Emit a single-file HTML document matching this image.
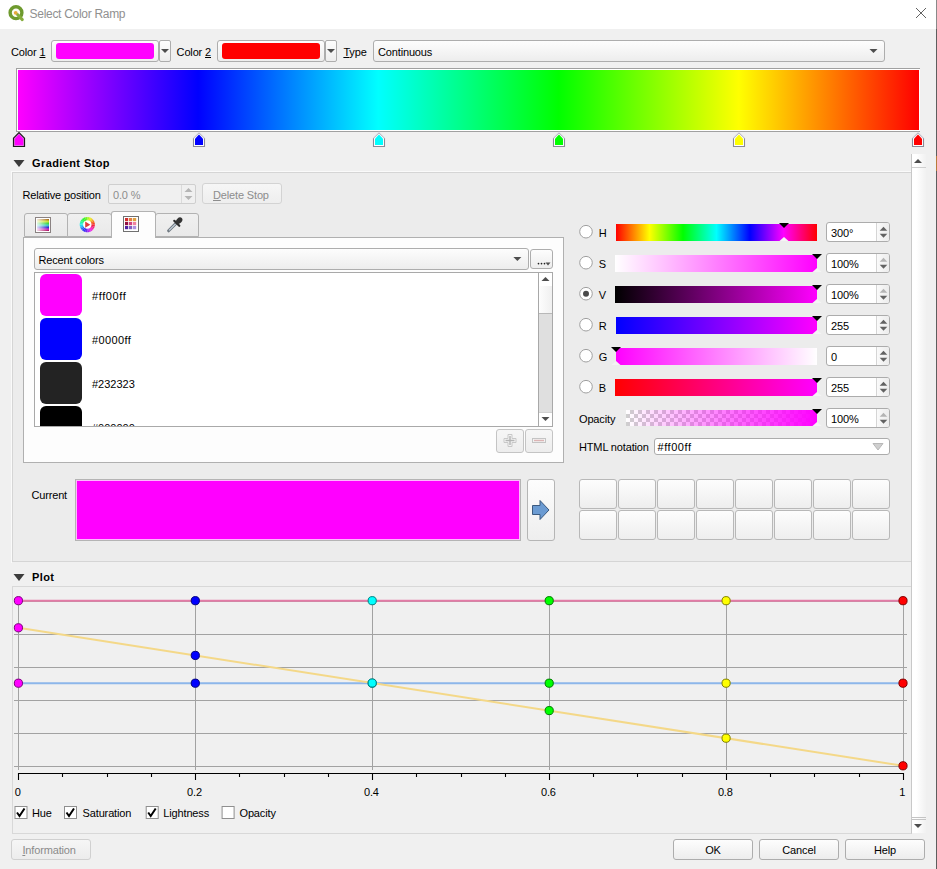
<!DOCTYPE html><html><head><meta charset="utf-8"><style>
html,body{margin:0;padding:0;}
body{width:937px;height:869px;overflow:hidden;position:relative;background:#f0f0f0;font-family:"Liberation Sans", sans-serif;}
.t{position:absolute;white-space:nowrap;letter-spacing:-0.15px;}
.b{position:absolute;box-sizing:border-box;}
svg{position:absolute;left:0;top:0;}
u{text-decoration:underline;text-underline-offset:1px;}
</style></head><body>

<div class="b" style="left:0px;top:0px;width:937px;height:29px;background:#fff"></div>
<svg width="40" height="29" style="left:0;top:0">
<circle cx="16" cy="12.7" r="5.9" fill="#fbfbf3" stroke="#6e9a2e" stroke-width="3.4"/>
<line x1="17.5" y1="14.5" x2="22.3" y2="19.6" stroke="#86ad3c" stroke-width="3" stroke-linecap="round"/>
<circle cx="15.7" cy="12.8" r="1.9" fill="#e6a83a"/>
</svg>
<div class="t" style="left:29.6px;top:7.34px;font-size:12px;line-height:15px;color:#909090;font-weight:normal;letter-spacing:-0.3px;">Select Color Ramp</div>
<svg width="937" height="29" style="left:0;top:0"><path d="M916 8 L926 18 M926 8 L916 18" stroke="#505050" stroke-width="0.9"/></svg>
<div class="b" style="left:936px;top:0px;width:1px;height:29px;background:#8a8a8a"></div>
<div class="b" style="left:936px;top:29px;width:1px;height:840px;background:#5e5e5e"></div>
<div class="b" style="left:936px;top:156px;width:1px;height:15px;background:#b87a3a"></div>
<div class="t" style="left:11px;top:45.19px;font-size:11px;line-height:14px;color:#000;font-weight:normal;">Color <u>1</u></div>
<div class="b" style="left:51px;top:40px;width:108px;height:22px;border:1px solid #adadad;border-radius:3px;background:linear-gradient(#fdfdfd,#ededed)"></div>
<div class="b" style="left:56px;top:43px;width:98px;height:16px;background:#ff00ff;border-radius:3px"></div>
<div class="b" style="left:159px;top:40px;width:12px;height:22px;border:1px solid #adadad;border-radius:2px;background:linear-gradient(#fdfdfd,#ededed)"></div>
<svg width="937" height="869" style="pointer-events:none"><path d="M161.0 49.0 L169.0 49.0 L165 53.0 Z" fill="#4d4d4d"/></svg>
<div class="t" style="left:176.6px;top:45.19px;font-size:11px;line-height:14px;color:#000;font-weight:normal;">Color <u>2</u></div>
<div class="b" style="left:217px;top:40px;width:108px;height:22px;border:1px solid #adadad;border-radius:3px;background:linear-gradient(#fdfdfd,#ededed)"></div>
<div class="b" style="left:222px;top:43px;width:98px;height:16px;background:#ff0000;border-radius:3px"></div>
<div class="b" style="left:325px;top:40px;width:12px;height:22px;border:1px solid #adadad;border-radius:2px;background:linear-gradient(#fdfdfd,#ededed)"></div>
<svg width="937" height="869" style="pointer-events:none"><path d="M327.0 49.0 L335.0 49.0 L331 53.0 Z" fill="#4d4d4d"/></svg>
<div class="t" style="left:343.4px;top:45.19px;font-size:11px;line-height:14px;color:#000;font-weight:normal;"><u>T</u>ype</div>
<div class="b" style="left:373px;top:40px;width:512px;height:22px;border:1px solid #adadad;border-radius:3px;background:linear-gradient(#fdfdfd,#ededed)"></div>
<div class="t" style="left:378px;top:45.19px;font-size:11px;line-height:14px;color:#000;font-weight:normal;">Continuous</div>
<svg width="937" height="869" style="pointer-events:none"><path d="M869.5 49.0 L877.5 49.0 L873.5 53.0 Z" fill="#4d4d4d"/></svg>
<div class="b" style="left:16px;top:68px;width:904px;height:64px;border:1px solid #a0a0a0;border-right:none;background:#fff"></div>
<div class="b" style="left:18px;top:70px;width:901px;height:60px;background:linear-gradient(to right,#ff00ff,#0000ff,#00ffff,#00ff00,#ffff00,#ff0000)"></div>
<svg width="937" height="869"><path d="M13.5 146.5 L13.5 138.2 L19 132.7 L24.5 138.2 L24.5 146.5 Z" fill="#e868e8" stroke="#1a1a1a" stroke-width="1.2"/><path d="M15.0 145 L15.0 138.8 L19 134.6 L23.0 138.8 L23.0 145 Z" fill="#ff00ff"/></svg>
<svg width="937" height="869"><path d="M193.5 146.5 L193.5 138.2 L199 132.7 L204.5 138.2 L204.5 146.5 Z" fill="#fff" stroke="#8a8a98" stroke-width="1.1"/><path d="M193.2 138.2 L199 132.2 L204.8 138.2" fill="none" stroke="#e4e4ea" stroke-width="1.1"/><path d="M195.0 145 L195.0 138.8 L199 134.6 L203.0 138.8 L203.0 145 Z" fill="#0000ff"/></svg>
<svg width="937" height="869"><path d="M373.5 146.5 L373.5 138.2 L379 132.7 L384.5 138.2 L384.5 146.5 Z" fill="#fff" stroke="#8a8a98" stroke-width="1.1"/><path d="M373.2 138.2 L379 132.2 L384.8 138.2" fill="none" stroke="#e4e4ea" stroke-width="1.1"/><path d="M375.0 145 L375.0 138.8 L379 134.6 L383.0 138.8 L383.0 145 Z" fill="#00ffff"/></svg>
<svg width="937" height="869"><path d="M553.5 146.5 L553.5 138.2 L559 132.7 L564.5 138.2 L564.5 146.5 Z" fill="#fff" stroke="#8a8a98" stroke-width="1.1"/><path d="M553.2 138.2 L559 132.2 L564.8 138.2" fill="none" stroke="#e4e4ea" stroke-width="1.1"/><path d="M555.0 145 L555.0 138.8 L559 134.6 L563.0 138.8 L563.0 145 Z" fill="#00ff00"/></svg>
<svg width="937" height="869"><path d="M733.5 146.5 L733.5 138.2 L739 132.7 L744.5 138.2 L744.5 146.5 Z" fill="#fff" stroke="#8a8a98" stroke-width="1.1"/><path d="M733.2 138.2 L739 132.2 L744.8 138.2" fill="none" stroke="#e4e4ea" stroke-width="1.1"/><path d="M735.0 145 L735.0 138.8 L739 134.6 L743.0 138.8 L743.0 145 Z" fill="#ffff00"/></svg>
<svg width="937" height="869"><path d="M912.5 146.5 L912.5 138.2 L918 132.7 L923.5 138.2 L923.5 146.5 Z" fill="#fff" stroke="#8a8a98" stroke-width="1.1"/><path d="M912.2 138.2 L918 132.2 L923.8 138.2" fill="none" stroke="#e4e4ea" stroke-width="1.1"/><path d="M914.0 145 L914.0 138.8 L918 134.6 L922.0 138.8 L922.0 145 Z" fill="#ff0000"/></svg>
<svg width="937" height="869"><path d="M13.5 160 L24.5 160 L19 167 Z" fill="#3c3c3c"/></svg>
<div class="t" style="left:32px;top:156.19px;font-size:11px;line-height:14px;color:#000;font-weight:bold;letter-spacing:0.4px;">Gradient Stop</div>
<div class="b" style="left:11px;top:171px;width:901px;height:392px;border-top:1px solid #fafafa;border-left:1px solid #fafafa;"></div>
<div class="b" style="left:12px;top:172px;width:900px;height:390px;border:1px solid #d5d5d5;background:#ececec"></div>
<div class="t" style="left:22.5px;top:187.89px;font-size:11px;line-height:14px;color:#000;font-weight:normal;">Relative <u>p</u>osition</div>
<div class="b" style="left:108px;top:184px;width:88px;height:20px;border:1px solid #cfcfcf;border-radius:2px;background:#f0f0f0"></div>
<div class="b" style="left:181px;top:185px;width:1px;height:18px;background:#dadada"></div>
<div class="t" style="left:113px;top:187.69px;font-size:11px;line-height:14px;color:#8d8d8d;font-weight:normal;">0.0 %</div>
<svg width="937" height="869"><path d="M184.5 192 L192.5 192 L188.5 188 Z M184.5 196 L192.5 196 L188.5 200 Z" fill="#b5b5b5"/></svg>
<div class="b" style="left:202px;top:183px;width:80px;height:21px;border:1px solid #d3d3d3;border-radius:3px;background:linear-gradient(#f6f6f6,#eeeeee)"></div>
<div class="t" style="left:213px;top:187.69px;font-size:11px;line-height:14px;color:#8d8d8d;font-weight:normal;"><u>D</u>elete Stop</div>
<div class="b" style="left:23px;top:237px;width:541px;height:226px;border:1px solid #b0b0b0;background:#fdfdfd"></div>
<div class="b" style="left:24px;top:213px;width:44px;height:24px;border:1px solid #b2b2b2;border-radius:3px 3px 0 0;background:linear-gradient(#f0f0f0,#e9e9e9)"></div>
<div class="b" style="left:67px;top:213px;width:45px;height:24px;border:1px solid #b2b2b2;border-radius:3px 3px 0 0;background:linear-gradient(#f0f0f0,#e9e9e9)"></div>
<div class="b" style="left:155px;top:213px;width:44px;height:24px;border:1px solid #b2b2b2;border-radius:3px 3px 0 0;background:linear-gradient(#f0f0f0,#e9e9e9)"></div>
<div class="b" style="left:111px;top:211px;width:45px;height:27px;border:1px solid #b2b2b2;border-bottom:none;border-radius:3px 3px 0 0;background:#fdfdfd"></div>
<svg width="937" height="869">
<defs><linearGradient id="tg1" x1="0" y1="0" x2="0" y2="1">
<stop offset="0" stop-color="#a05010"/><stop offset="0.2" stop-color="#c8e020"/><stop offset="0.38" stop-color="#30d040"/><stop offset="0.52" stop-color="#30d0c0"/><stop offset="0.7" stop-color="#2020d0"/><stop offset="0.85" stop-color="#d020c0"/><stop offset="1" stop-color="#a00040"/></linearGradient>
<linearGradient id="tg1w" x1="0" y1="0" x2="1" y2="0"><stop offset="0" stop-color="#fff" stop-opacity="0.85"/><stop offset="1" stop-color="#fff" stop-opacity="0"/></linearGradient></defs>
<rect x="35.5" y="217.5" width="15" height="15" fill="#fff" stroke="#8a8282"/>
<rect x="37" y="219" width="12" height="12" fill="url(#tg1)"/>
<rect x="37" y="219" width="12" height="12" fill="url(#tg1w)"/>
</svg>
<svg width="937" height="869"><path d="M91.30 224.60 L94.90 224.60 A7.6 7.6 0 0 1 94.64 226.57 L91.16 225.64 A4.0 4.0 0 0 0 91.30 224.60 Z" fill="hsl(352,90%,55%)"/><path d="M91.16 225.64 L94.64 226.57 A7.6 7.6 0 0 1 93.88 228.40 L90.76 226.60 A4.0 4.0 0 0 0 91.16 225.64 Z" fill="hsl(337,90%,55%)"/><path d="M90.76 226.60 L93.88 228.40 A7.6 7.6 0 0 1 92.67 229.97 L90.13 227.43 A4.0 4.0 0 0 0 90.76 226.60 Z" fill="hsl(322,90%,55%)"/><path d="M90.13 227.43 L92.67 229.97 A7.6 7.6 0 0 1 91.10 231.18 L89.30 228.06 A4.0 4.0 0 0 0 90.13 227.43 Z" fill="hsl(307,90%,55%)"/><path d="M89.30 228.06 L91.10 231.18 A7.6 7.6 0 0 1 89.27 231.94 L88.34 228.46 A4.0 4.0 0 0 0 89.30 228.06 Z" fill="hsl(292,90%,55%)"/><path d="M88.34 228.46 L89.27 231.94 A7.6 7.6 0 0 1 87.30 232.20 L87.30 228.60 A4.0 4.0 0 0 0 88.34 228.46 Z" fill="hsl(277,90%,55%)"/><path d="M87.30 228.60 L87.30 232.20 A7.6 7.6 0 0 1 85.33 231.94 L86.26 228.46 A4.0 4.0 0 0 0 87.30 228.60 Z" fill="hsl(262,90%,55%)"/><path d="M86.26 228.46 L85.33 231.94 A7.6 7.6 0 0 1 83.50 231.18 L85.30 228.06 A4.0 4.0 0 0 0 86.26 228.46 Z" fill="hsl(247,90%,55%)"/><path d="M85.30 228.06 L83.50 231.18 A7.6 7.6 0 0 1 81.93 229.97 L84.47 227.43 A4.0 4.0 0 0 0 85.30 228.06 Z" fill="hsl(232,90%,55%)"/><path d="M84.47 227.43 L81.93 229.97 A7.6 7.6 0 0 1 80.72 228.40 L83.84 226.60 A4.0 4.0 0 0 0 84.47 227.43 Z" fill="hsl(217,90%,55%)"/><path d="M83.84 226.60 L80.72 228.40 A7.6 7.6 0 0 1 79.96 226.57 L83.44 225.64 A4.0 4.0 0 0 0 83.84 226.60 Z" fill="hsl(202,90%,55%)"/><path d="M83.44 225.64 L79.96 226.57 A7.6 7.6 0 0 1 79.70 224.60 L83.30 224.60 A4.0 4.0 0 0 0 83.44 225.64 Z" fill="hsl(187,90%,55%)"/><path d="M83.30 224.60 L79.70 224.60 A7.6 7.6 0 0 1 79.96 222.63 L83.44 223.56 A4.0 4.0 0 0 0 83.30 224.60 Z" fill="hsl(172,90%,55%)"/><path d="M83.44 223.56 L79.96 222.63 A7.6 7.6 0 0 1 80.72 220.80 L83.84 222.60 A4.0 4.0 0 0 0 83.44 223.56 Z" fill="hsl(157,90%,55%)"/><path d="M83.84 222.60 L80.72 220.80 A7.6 7.6 0 0 1 81.93 219.23 L84.47 221.77 A4.0 4.0 0 0 0 83.84 222.60 Z" fill="hsl(142,90%,55%)"/><path d="M84.47 221.77 L81.93 219.23 A7.6 7.6 0 0 1 83.50 218.02 L85.30 221.14 A4.0 4.0 0 0 0 84.47 221.77 Z" fill="hsl(127,90%,55%)"/><path d="M85.30 221.14 L83.50 218.02 A7.6 7.6 0 0 1 85.33 217.26 L86.26 220.74 A4.0 4.0 0 0 0 85.30 221.14 Z" fill="hsl(112,90%,55%)"/><path d="M86.26 220.74 L85.33 217.26 A7.6 7.6 0 0 1 87.30 217.00 L87.30 220.60 A4.0 4.0 0 0 0 86.26 220.74 Z" fill="hsl(97,90%,55%)"/><path d="M87.30 220.60 L87.30 217.00 A7.6 7.6 0 0 1 89.27 217.26 L88.34 220.74 A4.0 4.0 0 0 0 87.30 220.60 Z" fill="hsl(82,90%,55%)"/><path d="M88.34 220.74 L89.27 217.26 A7.6 7.6 0 0 1 91.10 218.02 L89.30 221.14 A4.0 4.0 0 0 0 88.34 220.74 Z" fill="hsl(67,90%,55%)"/><path d="M89.30 221.14 L91.10 218.02 A7.6 7.6 0 0 1 92.67 219.23 L90.13 221.77 A4.0 4.0 0 0 0 89.30 221.14 Z" fill="hsl(52,90%,55%)"/><path d="M90.13 221.77 L92.67 219.23 A7.6 7.6 0 0 1 93.88 220.80 L90.76 222.60 A4.0 4.0 0 0 0 90.13 221.77 Z" fill="hsl(37,90%,55%)"/><path d="M90.76 222.60 L93.88 220.80 A7.6 7.6 0 0 1 94.64 222.63 L91.16 223.56 A4.0 4.0 0 0 0 90.76 222.60 Z" fill="hsl(22,90%,55%)"/><path d="M91.16 223.56 L94.64 222.63 A7.6 7.6 0 0 1 94.90 224.60 L91.30 224.60 A4.0 4.0 0 0 0 91.16 223.56 Z" fill="hsl(7,90%,55%)"/><circle cx="87.3" cy="224.6" r="4.0" fill="#fff"/><path d="M85.2 221.6 L85.2 227.8 L90.3 224.7 Z" fill="#e03c3c"/></svg>
<svg width="937" height="869"><rect x="123.5" y="216.5" width="15" height="15" fill="#fff" stroke="#707070"/><rect x="125" y="218" width="3.2" height="3.2" fill="#d03030"/><rect x="129" y="218" width="3.2" height="3.2" fill="#e08040"/><rect x="133" y="218" width="3.2" height="3.2" fill="#e0a040"/><rect x="125" y="222" width="3.2" height="3.2" fill="#901040"/><rect x="129" y="222" width="3.2" height="3.2" fill="#d04080"/><rect x="133" y="222" width="3.2" height="3.2" fill="#f080a0"/><rect x="125" y="226" width="3.2" height="3.2" fill="#5020a0"/><rect x="129" y="226" width="3.2" height="3.2" fill="#8060c0"/><rect x="133" y="226" width="3.2" height="3.2" fill="#b090e0"/></svg>
<svg width="937" height="869">
<line x1="168.6" y1="230.8" x2="176" y2="223.4" stroke="#6f7880" stroke-width="3" stroke-linecap="round"/>
<line x1="169" y1="230.4" x2="175.6" y2="223.8" stroke="#c8d4de" stroke-width="1.2"/>
<line x1="174.3" y1="220.8" x2="179.3" y2="225.8" stroke="#2e2e2e" stroke-width="2.2" stroke-linecap="round"/>
<ellipse cx="179.2" cy="220.6" rx="3.6" ry="2.6" transform="rotate(-45 179.2 220.6)" fill="#333"/>
</svg>
<div class="b" style="left:34px;top:248px;width:495px;height:22px;border:1px solid #adadad;border-radius:3px;background:linear-gradient(#fdfdfd,#ededed)"></div>
<div class="t" style="left:38.5px;top:252.99px;font-size:11px;line-height:14px;color:#000;font-weight:normal;">Recent colors</div>
<svg width="937" height="869" style="pointer-events:none"><path d="M513.4 257.0 L521.4 257.0 L517.4 261.0 Z" fill="#4d4d4d"/></svg>
<div class="b" style="left:530px;top:249px;width:23px;height:20px;border:1px solid #adadad;border-radius:3px;background:linear-gradient(#fdfdfd,#ededed)"></div>
<svg width="937" height="869"><circle cx="538.5" cy="263.6" r="0.85" fill="#222"/><circle cx="541.5" cy="263.6" r="0.85" fill="#222"/><circle cx="544.5" cy="263.6" r="0.85" fill="#222"/></svg>
<svg width="937" height="869" style="pointer-events:none"><path d="M545.5 262.5 L550.5 262.5 L548 265.5 Z" fill="#4d4d4d"/></svg>
<div class="b" style="left:34px;top:272px;width:519px;height:155px;border:1px solid #a9a9a9;background:#fff;overflow:hidden"></div>
<div class="b" style="left:35px;top:273px;width:503px;height:153px;overflow:hidden">
<div class="b" style="left:5px;top:1px;width:42px;height:42px;border-radius:6px;background:#ff00ff"></div>
<div class="t" style="left:57px;top:16.5px;font-size:11px;line-height:13px;letter-spacing:0.6px">#ff00ff</div>
<div class="b" style="left:5px;top:45px;width:42px;height:42px;border-radius:6px;background:#0000ff"></div>
<div class="t" style="left:57px;top:60.5px;font-size:11px;line-height:13px;letter-spacing:0.4px">#0000ff</div>
<div class="b" style="left:5px;top:89px;width:42px;height:42px;border-radius:6px;background:#232323"></div>
<div class="t" style="left:57px;top:104.5px;font-size:11px;line-height:13px;letter-spacing:0px">#232323</div>
<div class="b" style="left:5px;top:133px;width:42px;height:42px;border-radius:6px;background:#000000"></div>
<div class="t" style="left:57px;top:148.5px;font-size:11px;line-height:13px;letter-spacing:0px">#000000</div>
</div>
<div class="b" style="left:538px;top:273px;width:14px;height:153px;background:#dfdfdf;border-left:1px solid #a8a8a8"></div>
<div class="b" style="left:539px;top:273px;width:13px;height:13px;background:#fff"></div>
<div class="b" style="left:539px;top:286px;width:13px;height:28px;background:linear-gradient(to right,#fdfdfd,#f0f0f0);border-bottom:1px solid #b8b8b8"></div>
<div class="b" style="left:539px;top:412px;width:13px;height:14px;background:#fff;border-top:1px solid #d0d0d0"></div>
<svg width="937" height="869"><path d="M541.5 281 L549.5 281 L545.5 277 Z M541.5 417 L549.5 417 L545.5 421 Z" fill="#4d4d4d"/></svg>
<div class="b" style="left:496px;top:429px;width:28px;height:24px;border:1px solid #c4c4c4;border-radius:3px;background:linear-gradient(#f6f6f6,#ededed)"></div>
<div class="b" style="left:525px;top:429px;width:28px;height:24px;border:1px solid #c4c4c4;border-radius:3px;background:linear-gradient(#f6f6f6,#ededed)"></div>
<svg width="937" height="869"><path d="M508 434.5 L512 434.5 L512 438.5 L516 438.5 L516 442.5 L512 442.5 L512 446.5 L508 446.5 L508 442.5 L504 442.5 L504 438.5 L508 438.5 Z" fill="#f4f4f4" stroke="#c8c8c8"/><path d="M510 436 L510 445 M505.5 440.5 L514.5 440.5" stroke="#b4b4b4" stroke-width="1.4"/><rect x="532.5" y="438.5" width="13" height="4" fill="#f2f2f2" stroke="#c4c4c4"/><line x1="534" y1="440.5" x2="544" y2="440.5" stroke="#dcb4b4" stroke-width="1.4"/></svg>
<svg width="937" height="869"><circle cx="586" cy="231.7" r="6.3" fill="#fff" stroke="#a0a0a0" stroke-width="1"/></svg>
<div class="t" style="left:598.8px;top:226.19px;font-size:11px;line-height:14px;color:#000;font-weight:normal;">H</div>
<svg width="937" height="869"><defs><linearGradient id="sg0" x1="0" y1="0" x2="1" y2="0"><stop offset="0" stop-color="#ff0000"/><stop offset="0.16666666666666666" stop-color="#ffff00"/><stop offset="0.3333333333333333" stop-color="#00ff00"/><stop offset="0.5" stop-color="#00ffff"/><stop offset="0.6666666666666666" stop-color="#0000ff"/><stop offset="0.8333333333333334" stop-color="#ff00ff"/><stop offset="1" stop-color="#ff0000"/></linearGradient></defs><rect x="616" y="224" width="201" height="17" fill="url(#sg0)"/><path d="M779 223 L789 223 L784 228 Z" fill="#000"/><path d="M779.5 241 L788.5 241 L784 237 Z" fill="#f4f4f4"/></svg>
<div class="b" style="left:826px;top:222px;width:64px;height:20px;border:1px solid #acacac;border-radius:3px;background:#fff"></div>
<div class="b" style="left:876px;top:223px;width:1px;height:18px;background:#d5d5d5"></div>
<div class="b" style="left:877px;top:223px;width:12px;height:18px;background:linear-gradient(to right,#fafafa,#ececec);border-radius:0 2px 2px 0"></div>
<div class="t" style="left:831px;top:225.69px;font-size:11px;line-height:14px;color:#000;font-weight:normal;">300°</div>
<svg width="937" height="869"><path d="M879.7 230.7 L887.3 230.7 L883.5 226.7 Z" fill="#626262"/><path d="M879.7 233.7 L887.3 233.7 L883.5 237.7 Z" fill="#626262"/></svg>
<svg width="937" height="869"><circle cx="586" cy="262.7" r="6.3" fill="#fff" stroke="#a0a0a0" stroke-width="1"/></svg>
<div class="t" style="left:598.8px;top:257.19px;font-size:11px;line-height:14px;color:#000;font-weight:normal;">S</div>
<svg width="937" height="869"><defs><linearGradient id="sg1" x1="0" y1="0" x2="1" y2="0"><stop offset="0" stop-color="#ffffff"/><stop offset="1" stop-color="#ff00ff"/></linearGradient></defs><rect x="615" y="255" width="202" height="17" fill="url(#sg1)"/><path d="M812 254 L822 254 L817 259 Z" fill="#000"/><path d="M812.5 272 L821.5 272 L817 268 Z" fill="#f4f4f4"/></svg>
<div class="b" style="left:826px;top:253px;width:64px;height:20px;border:1px solid #acacac;border-radius:3px;background:#fff"></div>
<div class="b" style="left:876px;top:254px;width:1px;height:18px;background:#d5d5d5"></div>
<div class="b" style="left:877px;top:254px;width:12px;height:18px;background:linear-gradient(to right,#fafafa,#ececec);border-radius:0 2px 2px 0"></div>
<div class="t" style="left:831px;top:256.69px;font-size:11px;line-height:14px;color:#000;font-weight:normal;">100%</div>
<svg width="937" height="869"><path d="M879.7 261.7 L887.3 261.7 L883.5 257.7 Z" fill="#b4b4b4"/><path d="M879.7 264.7 L887.3 264.7 L883.5 268.7 Z" fill="#626262"/></svg>
<svg width="937" height="869"><circle cx="586" cy="293.7" r="6.3" fill="#fff" stroke="#a0a0a0" stroke-width="1"/><circle cx="586" cy="293.7" r="3" fill="#4a4a4a"/></svg>
<div class="t" style="left:598.8px;top:288.19px;font-size:11px;line-height:14px;color:#000;font-weight:normal;">V</div>
<svg width="937" height="869"><defs><linearGradient id="sg2" x1="0" y1="0" x2="1" y2="0"><stop offset="0" stop-color="#000000"/><stop offset="1" stop-color="#ff00ff"/></linearGradient></defs><rect x="615" y="286" width="202" height="17" fill="url(#sg2)"/><path d="M812 285 L822 285 L817 290 Z" fill="#000"/><path d="M812.5 303 L821.5 303 L817 299 Z" fill="#f4f4f4"/></svg>
<div class="b" style="left:826px;top:284px;width:64px;height:20px;border:1px solid #acacac;border-radius:3px;background:#fff"></div>
<div class="b" style="left:876px;top:285px;width:1px;height:18px;background:#d5d5d5"></div>
<div class="b" style="left:877px;top:285px;width:12px;height:18px;background:linear-gradient(to right,#fafafa,#ececec);border-radius:0 2px 2px 0"></div>
<div class="t" style="left:831px;top:287.69px;font-size:11px;line-height:14px;color:#000;font-weight:normal;">100%</div>
<svg width="937" height="869"><path d="M879.7 292.7 L887.3 292.7 L883.5 288.7 Z" fill="#b4b4b4"/><path d="M879.7 295.7 L887.3 295.7 L883.5 299.7 Z" fill="#626262"/></svg>
<svg width="937" height="869"><circle cx="586" cy="324.7" r="6.3" fill="#fff" stroke="#a0a0a0" stroke-width="1"/></svg>
<div class="t" style="left:598.8px;top:319.19px;font-size:11px;line-height:14px;color:#000;font-weight:normal;">R</div>
<svg width="937" height="869"><defs><linearGradient id="sg3" x1="0" y1="0" x2="1" y2="0"><stop offset="0" stop-color="#0000ff"/><stop offset="1" stop-color="#ff00ff"/></linearGradient></defs><rect x="616" y="317" width="201" height="17" fill="url(#sg3)"/><path d="M812 316 L822 316 L817 321 Z" fill="#000"/><path d="M812.5 334 L821.5 334 L817 330 Z" fill="#f4f4f4"/></svg>
<div class="b" style="left:826px;top:315px;width:64px;height:20px;border:1px solid #acacac;border-radius:3px;background:#fff"></div>
<div class="b" style="left:876px;top:316px;width:1px;height:18px;background:#d5d5d5"></div>
<div class="b" style="left:877px;top:316px;width:12px;height:18px;background:linear-gradient(to right,#fafafa,#ececec);border-radius:0 2px 2px 0"></div>
<div class="t" style="left:831px;top:318.69px;font-size:11px;line-height:14px;color:#000;font-weight:normal;">255</div>
<svg width="937" height="869"><path d="M879.7 323.7 L887.3 323.7 L883.5 319.7 Z" fill="#626262"/><path d="M879.7 326.7 L887.3 326.7 L883.5 330.7 Z" fill="#626262"/></svg>
<svg width="937" height="869"><circle cx="586" cy="355.7" r="6.3" fill="#fff" stroke="#a0a0a0" stroke-width="1"/></svg>
<div class="t" style="left:598.8px;top:350.19px;font-size:11px;line-height:14px;color:#000;font-weight:normal;">G</div>
<svg width="937" height="869"><defs><linearGradient id="sg4" x1="0" y1="0" x2="1" y2="0"><stop offset="0" stop-color="#ff00ff"/><stop offset="1" stop-color="#ffffff"/></linearGradient></defs><rect x="616" y="348" width="201" height="17" fill="url(#sg4)"/><path d="M611 347 L621 347 L616 352 Z" fill="#000"/><path d="M611.5 365 L620.5 365 L616 361 Z" fill="#f4f4f4"/></svg>
<div class="b" style="left:826px;top:346px;width:64px;height:20px;border:1px solid #acacac;border-radius:3px;background:#fff"></div>
<div class="b" style="left:876px;top:347px;width:1px;height:18px;background:#d5d5d5"></div>
<div class="b" style="left:877px;top:347px;width:12px;height:18px;background:linear-gradient(to right,#fafafa,#ececec);border-radius:0 2px 2px 0"></div>
<div class="t" style="left:831px;top:349.69px;font-size:11px;line-height:14px;color:#000;font-weight:normal;">0</div>
<svg width="937" height="869"><path d="M879.7 354.7 L887.3 354.7 L883.5 350.7 Z" fill="#626262"/><path d="M879.7 357.7 L887.3 357.7 L883.5 361.7 Z" fill="#626262"/></svg>
<svg width="937" height="869"><circle cx="586" cy="386.7" r="6.3" fill="#fff" stroke="#a0a0a0" stroke-width="1"/></svg>
<div class="t" style="left:598.8px;top:381.19px;font-size:11px;line-height:14px;color:#000;font-weight:normal;">B</div>
<svg width="937" height="869"><defs><linearGradient id="sg5" x1="0" y1="0" x2="1" y2="0"><stop offset="0" stop-color="#ff0000"/><stop offset="1" stop-color="#ff00ff"/></linearGradient></defs><rect x="615" y="379" width="202" height="17" fill="url(#sg5)"/><path d="M812 378 L822 378 L817 383 Z" fill="#000"/><path d="M812.5 396 L821.5 396 L817 392 Z" fill="#f4f4f4"/></svg>
<div class="b" style="left:826px;top:377px;width:64px;height:20px;border:1px solid #acacac;border-radius:3px;background:#fff"></div>
<div class="b" style="left:876px;top:378px;width:1px;height:18px;background:#d5d5d5"></div>
<div class="b" style="left:877px;top:378px;width:12px;height:18px;background:linear-gradient(to right,#fafafa,#ececec);border-radius:0 2px 2px 0"></div>
<div class="t" style="left:831px;top:380.69px;font-size:11px;line-height:14px;color:#000;font-weight:normal;">255</div>
<svg width="937" height="869"><path d="M879.7 385.7 L887.3 385.7 L883.5 381.7 Z" fill="#626262"/><path d="M879.7 388.7 L887.3 388.7 L883.5 392.7 Z" fill="#626262"/></svg>
<div class="t" style="left:579px;top:411.99px;font-size:11px;line-height:14px;color:#000;font-weight:normal;">Opacity</div>
<svg width="937" height="869"><defs><linearGradient id="sgo" x1="0" y1="0" x2="1" y2="0"><stop offset="0" stop-color="#ff00ff" stop-opacity="0"/><stop offset="1" stop-color="#ff00ff" stop-opacity="1"/></linearGradient><pattern id="chksgo" x="626" y="410" width="8" height="8" patternUnits="userSpaceOnUse"><rect width="8" height="8" fill="#cfcfcf"/><rect width="4" height="4" fill="#fff"/><rect x="4" y="4" width="4" height="4" fill="#fff"/></pattern></defs><rect x="626" y="410" width="191" height="16" fill="url(#chksgo)"/><rect x="626" y="410" width="191" height="16" fill="url(#sgo)"/><path d="M812 409 L822 409 L817 414 Z" fill="#000"/><path d="M812.5 426 L821.5 426 L817 422 Z" fill="#f4f4f4"/></svg>
<div class="b" style="left:826px;top:408px;width:64px;height:20px;border:1px solid #acacac;border-radius:3px;background:#fff"></div>
<div class="b" style="left:876px;top:409px;width:1px;height:18px;background:#d5d5d5"></div>
<div class="b" style="left:877px;top:409px;width:12px;height:18px;background:linear-gradient(to right,#fafafa,#ececec);border-radius:0 2px 2px 0"></div>
<div class="t" style="left:831px;top:411.69px;font-size:11px;line-height:14px;color:#000;font-weight:normal;">100%</div>
<svg width="937" height="869"><path d="M879.7 416.7 L887.3 416.7 L883.5 412.7 Z" fill="#b4b4b4"/><path d="M879.7 419.7 L887.3 419.7 L883.5 423.7 Z" fill="#626262"/></svg>
<div class="t" style="left:579px;top:439.79px;font-size:11px;line-height:14px;color:#000;font-weight:normal;">HTML notation</div>
<div class="b" style="left:654px;top:438px;width:236px;height:17px;border:1px solid #acacac;border-radius:3px;background:#fff"></div>
<div class="t" style="left:657.5px;top:439.69px;font-size:11px;line-height:14px;color:#000;font-weight:normal;letter-spacing:0.55px;">#ff00ff</div>
<svg width="937" height="869"><path d="M873 443.5 L883 443.5 L878 450 Z" fill="#cfcfcf" stroke="#b8b8b8" stroke-width="1"/></svg>
<div class="t" style="left:31.4px;top:488.19px;font-size:11px;line-height:14px;color:#000;font-weight:normal;">Current</div>
<div class="b" style="left:75px;top:479px;width:446px;height:62px;border:1px solid #b4b4b4;background:#ffb8ff"></div>
<div class="b" style="left:77px;top:481px;width:442px;height:58px;background:#ff00ff"></div>
<div class="b" style="left:527px;top:479px;width:28px;height:62px;border:1px solid #b5b5b5;border-radius:3px;background:linear-gradient(#fdfdfd,#eeeeee)"></div>
<svg width="937" height="869"><path d="M532.5 505.5 L540 505.5 L540 500.5 L549 510 L540 519.5 L540 514.5 L532.5 514.5 Z" fill="#6b9bd2" stroke="#3b5a80" stroke-width="1"/></svg>
<div class="b" style="left:579px;top:479px;width:38px;height:30px;border:1px solid #b8b8b8;border-radius:3px;background:linear-gradient(#fdfdfd,#eeeeee)"></div>
<div class="b" style="left:618px;top:479px;width:38px;height:30px;border:1px solid #b8b8b8;border-radius:3px;background:linear-gradient(#fdfdfd,#eeeeee)"></div>
<div class="b" style="left:657px;top:479px;width:38px;height:30px;border:1px solid #b8b8b8;border-radius:3px;background:linear-gradient(#fdfdfd,#eeeeee)"></div>
<div class="b" style="left:696px;top:479px;width:38px;height:30px;border:1px solid #b8b8b8;border-radius:3px;background:linear-gradient(#fdfdfd,#eeeeee)"></div>
<div class="b" style="left:735px;top:479px;width:38px;height:30px;border:1px solid #b8b8b8;border-radius:3px;background:linear-gradient(#fdfdfd,#eeeeee)"></div>
<div class="b" style="left:774px;top:479px;width:38px;height:30px;border:1px solid #b8b8b8;border-radius:3px;background:linear-gradient(#fdfdfd,#eeeeee)"></div>
<div class="b" style="left:813px;top:479px;width:38px;height:30px;border:1px solid #b8b8b8;border-radius:3px;background:linear-gradient(#fdfdfd,#eeeeee)"></div>
<div class="b" style="left:852px;top:479px;width:38px;height:30px;border:1px solid #b8b8b8;border-radius:3px;background:linear-gradient(#fdfdfd,#eeeeee)"></div>
<div class="b" style="left:579px;top:510px;width:38px;height:30px;border:1px solid #b8b8b8;border-radius:3px;background:linear-gradient(#fdfdfd,#eeeeee)"></div>
<div class="b" style="left:618px;top:510px;width:38px;height:30px;border:1px solid #b8b8b8;border-radius:3px;background:linear-gradient(#fdfdfd,#eeeeee)"></div>
<div class="b" style="left:657px;top:510px;width:38px;height:30px;border:1px solid #b8b8b8;border-radius:3px;background:linear-gradient(#fdfdfd,#eeeeee)"></div>
<div class="b" style="left:696px;top:510px;width:38px;height:30px;border:1px solid #b8b8b8;border-radius:3px;background:linear-gradient(#fdfdfd,#eeeeee)"></div>
<div class="b" style="left:735px;top:510px;width:38px;height:30px;border:1px solid #b8b8b8;border-radius:3px;background:linear-gradient(#fdfdfd,#eeeeee)"></div>
<div class="b" style="left:774px;top:510px;width:38px;height:30px;border:1px solid #b8b8b8;border-radius:3px;background:linear-gradient(#fdfdfd,#eeeeee)"></div>
<div class="b" style="left:813px;top:510px;width:38px;height:30px;border:1px solid #b8b8b8;border-radius:3px;background:linear-gradient(#fdfdfd,#eeeeee)"></div>
<div class="b" style="left:852px;top:510px;width:38px;height:30px;border:1px solid #b8b8b8;border-radius:3px;background:linear-gradient(#fdfdfd,#eeeeee)"></div>
<svg width="937" height="869"><path d="M13.5 574 L24.5 574 L19 581 Z" fill="#3c3c3c"/></svg>
<div class="t" style="left:32px;top:569.69px;font-size:11px;line-height:14px;color:#000;font-weight:bold;letter-spacing:0.4px;">Plot</div>
<div class="b" style="left:12px;top:586px;width:900px;height:248px;border:1px solid #d8d8d8;border-right-color:#c8c8c8;background:#f0f0f0"></div>
<svg width="937" height="869"><line x1="14" y1="766.5" x2="907" y2="766.5" stroke="#a2a2a2" stroke-width="1"/><line x1="14" y1="733.5" x2="907" y2="733.5" stroke="#a2a2a2" stroke-width="1"/><line x1="14" y1="700.5" x2="907" y2="700.5" stroke="#a2a2a2" stroke-width="1"/><line x1="14" y1="667.5" x2="907" y2="667.5" stroke="#a2a2a2" stroke-width="1"/><line x1="14" y1="634.5" x2="907" y2="634.5" stroke="#a2a2a2" stroke-width="1"/><line x1="14" y1="601.5" x2="907" y2="601.5" stroke="#a2a2a2" stroke-width="1"/><line x1="18.5" y1="601" x2="18.5" y2="770" stroke="#a2a2a2" stroke-width="1"/><line x1="195.5" y1="601" x2="195.5" y2="770" stroke="#a2a2a2" stroke-width="1"/><line x1="372.5" y1="601" x2="372.5" y2="770" stroke="#a2a2a2" stroke-width="1"/><line x1="549.5" y1="601" x2="549.5" y2="770" stroke="#a2a2a2" stroke-width="1"/><line x1="726.5" y1="601" x2="726.5" y2="770" stroke="#a2a2a2" stroke-width="1"/><line x1="903.5" y1="601" x2="903.5" y2="770" stroke="#a2a2a2" stroke-width="1"/><line x1="18" y1="773.5" x2="904" y2="773.5" stroke="#000" stroke-width="1.2"/><line x1="18.5" y1="773" x2="18.5" y2="780" stroke="#000" stroke-width="1.1"/><line x1="62.5" y1="773" x2="62.5" y2="777" stroke="#000" stroke-width="1.1"/><line x1="107.5" y1="773" x2="107.5" y2="777" stroke="#000" stroke-width="1.1"/><line x1="151.5" y1="773" x2="151.5" y2="777" stroke="#000" stroke-width="1.1"/><line x1="195.5" y1="773" x2="195.5" y2="780" stroke="#000" stroke-width="1.1"/><line x1="239.5" y1="773" x2="239.5" y2="777" stroke="#000" stroke-width="1.1"/><line x1="284.5" y1="773" x2="284.5" y2="777" stroke="#000" stroke-width="1.1"/><line x1="328.5" y1="773" x2="328.5" y2="777" stroke="#000" stroke-width="1.1"/><line x1="372.5" y1="773" x2="372.5" y2="780" stroke="#000" stroke-width="1.1"/><line x1="416.5" y1="773" x2="416.5" y2="777" stroke="#000" stroke-width="1.1"/><line x1="461.5" y1="773" x2="461.5" y2="777" stroke="#000" stroke-width="1.1"/><line x1="505.5" y1="773" x2="505.5" y2="777" stroke="#000" stroke-width="1.1"/><line x1="549.5" y1="773" x2="549.5" y2="780" stroke="#000" stroke-width="1.1"/><line x1="593.5" y1="773" x2="593.5" y2="777" stroke="#000" stroke-width="1.1"/><line x1="637.5" y1="773" x2="637.5" y2="777" stroke="#000" stroke-width="1.1"/><line x1="682.5" y1="773" x2="682.5" y2="777" stroke="#000" stroke-width="1.1"/><line x1="726.5" y1="773" x2="726.5" y2="780" stroke="#000" stroke-width="1.1"/><line x1="770.5" y1="773" x2="770.5" y2="777" stroke="#000" stroke-width="1.1"/><line x1="814.5" y1="773" x2="814.5" y2="777" stroke="#000" stroke-width="1.1"/><line x1="859.5" y1="773" x2="859.5" y2="777" stroke="#000" stroke-width="1.1"/><line x1="903.5" y1="773" x2="903.5" y2="780" stroke="#000" stroke-width="1.1"/><line x1="18.4" y1="600.6999999999999" x2="903.0" y2="600.6999999999999" stroke="#e37ba6" stroke-width="2"/><line x1="18.4" y1="683.25" x2="903.0" y2="683.25" stroke="#8cb6ea" stroke-width="2"/><line x1="18.4" y1="627.8334261838439" x2="903.0" y2="765.8" stroke="#f4d888" stroke-width="2"/><circle cx="18.4" cy="600.7" r="4.1" fill="#ff00ff" stroke="#7a007a" stroke-width="1"/><circle cx="18.4" cy="683.2" r="4.1" fill="#ff00ff" stroke="#7a007a" stroke-width="1"/><circle cx="18.4" cy="627.8" r="4.1" fill="#ff00ff" stroke="#7a007a" stroke-width="1"/><circle cx="195.3" cy="600.7" r="4.1" fill="#0000ff" stroke="#00007a" stroke-width="1"/><circle cx="195.3" cy="683.2" r="4.1" fill="#0000ff" stroke="#00007a" stroke-width="1"/><circle cx="195.3" cy="655.4" r="4.1" fill="#0000ff" stroke="#00007a" stroke-width="1"/><circle cx="372.2" cy="600.7" r="4.1" fill="#00ffff" stroke="#008080" stroke-width="1"/><circle cx="372.2" cy="683.2" r="4.1" fill="#00ffff" stroke="#008080" stroke-width="1"/><circle cx="372.2" cy="683.0" r="4.1" fill="#00ffff" stroke="#008080" stroke-width="1"/><circle cx="549.2" cy="600.7" r="4.1" fill="#00ff00" stroke="#007a00" stroke-width="1"/><circle cx="549.2" cy="683.2" r="4.1" fill="#00ff00" stroke="#007a00" stroke-width="1"/><circle cx="549.2" cy="710.6" r="4.1" fill="#00ff00" stroke="#007a00" stroke-width="1"/><circle cx="726.1" cy="600.7" r="4.1" fill="#ffff00" stroke="#808000" stroke-width="1"/><circle cx="726.1" cy="683.2" r="4.1" fill="#ffff00" stroke="#808000" stroke-width="1"/><circle cx="726.1" cy="738.2" r="4.1" fill="#ffff00" stroke="#808000" stroke-width="1"/><circle cx="903.0" cy="600.7" r="4.1" fill="#ff0000" stroke="#800000" stroke-width="1"/><circle cx="903.0" cy="683.2" r="4.1" fill="#ff0000" stroke="#800000" stroke-width="1"/><circle cx="903.0" cy="765.8" r="4.1" fill="#ff0000" stroke="#800000" stroke-width="1"/></svg>
<div class="t" style="left:-22.4px;width:80px;text-align:center;top:785.5px;font-size:11px;line-height:13px">0</div>
<div class="t" style="left:154.5px;width:80px;text-align:center;top:785.5px;font-size:11px;line-height:13px">0.2</div>
<div class="t" style="left:331.4px;width:80px;text-align:center;top:785.5px;font-size:11px;line-height:13px">0.4</div>
<div class="t" style="left:508.4px;width:80px;text-align:center;top:785.5px;font-size:11px;line-height:13px">0.6</div>
<div class="t" style="left:685.3px;width:80px;text-align:center;top:785.5px;font-size:11px;line-height:13px">0.8</div>
<div class="t" style="left:862.2px;width:80px;text-align:center;top:785.5px;font-size:11px;line-height:13px">1</div>
<svg width="937" height="869"><rect x="15.0" y="806.5" width="12" height="12" fill="#fff" stroke="#8f8f8f"/><path d="M17.0 812.5 L19.5 816 L24.5 808.5" fill="none" stroke="#000" stroke-width="2"/></svg>
<div class="t" style="left:32px;top:806.19px;font-size:11px;line-height:14px;color:#000;font-weight:normal;">Hue</div>
<svg width="937" height="869"><rect x="64.5" y="806.5" width="12" height="12" fill="#fff" stroke="#8f8f8f"/><path d="M66.5 812.5 L69 816 L74 808.5" fill="none" stroke="#000" stroke-width="2"/></svg>
<div class="t" style="left:82.6px;top:806.19px;font-size:11px;line-height:14px;color:#000;font-weight:normal;">Saturation</div>
<svg width="937" height="869"><rect x="146.2" y="806.5" width="12" height="12" fill="#fff" stroke="#8f8f8f"/><path d="M148.2 812.5 L150.7 816 L155.7 808.5" fill="none" stroke="#000" stroke-width="2"/></svg>
<div class="t" style="left:163.3px;top:806.19px;font-size:11px;line-height:14px;color:#000;font-weight:normal;">Lightness</div>
<svg width="937" height="869"><rect x="222.1" y="806.5" width="12" height="12" fill="#fff" stroke="#8f8f8f"/></svg>
<div class="t" style="left:239.5px;top:806.19px;font-size:11px;line-height:14px;color:#000;font-weight:normal;">Opacity</div>
<div class="b" style="left:911px;top:154px;width:15px;height:679px;border-left:1px solid #c8c8c8;background:linear-gradient(to right,#ffffff 30%,#f1f1f1)"></div>
<div class="b" style="left:912px;top:167px;width:14px;height:1px;background:#cfcfcf"></div>
<div class="b" style="left:912px;top:817px;width:14px;height:3px;border-top:1px solid #c4c4c4;border-bottom:1px solid #c4c4c4"></div>
<svg width="937" height="869"><path d="M914 163 L922 163 L918 159 Z M914 824 L922 824 L918 828 Z" fill="#4d4d4d"/></svg>
<div class="b" style="left:11px;top:839px;width:80px;height:21px;border:1px solid #d0d0d0;border-radius:3px;background:linear-gradient(#f6f6f6,#ececec)"></div>
<div class="t" style="left:22.4px;top:843.19px;font-size:11px;line-height:14px;color:#8b8b8b;font-weight:normal;"><u>I</u>nformation</div>
<div class="b" style="left:673px;top:839px;width:80px;height:21px;border:1px solid #adadad;border-radius:3px;background:linear-gradient(#fdfdfd,#ededed)"></div>
<div class="t" style="left:673px;width:80px;text-align:center;top:844.1px;font-size:11px;line-height:13px">OK</div>
<div class="b" style="left:759px;top:839px;width:80px;height:21px;border:1px solid #adadad;border-radius:3px;background:linear-gradient(#fdfdfd,#ededed)"></div>
<div class="t" style="left:759px;width:80px;text-align:center;top:844.1px;font-size:11px;line-height:13px">Cancel</div>
<div class="b" style="left:845px;top:839px;width:80px;height:21px;border:1px solid #adadad;border-radius:3px;background:linear-gradient(#fdfdfd,#ededed)"></div>
<div class="t" style="left:845px;width:80px;text-align:center;top:844.1px;font-size:11px;line-height:13px">Help</div>
</body></html>
